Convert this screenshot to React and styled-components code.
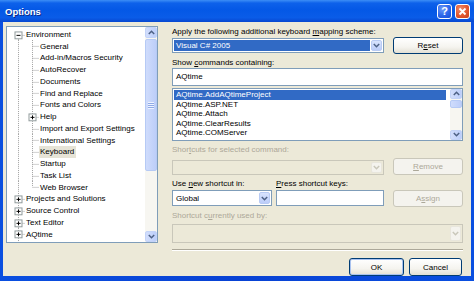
import styled, { createGlobalStyle } from "styled-components";

const GlobalStyle = createGlobalStyle`
  html, body {
    margin: 0;
    padding: 0;
    background: #0842d4;
  }
  body {
    width: 474px;
    height: 281px;
    overflow: hidden;
    font-family: "Liberation Sans", Arial, sans-serif;
    font-size: 8px;
    color: #000;
  }
`

const Window = styled.div`
  width: 474px;
  height: 281px;
  display: flex;
  flex-direction: column;
  background: linear-gradient(90deg, #0a4fe0 0%, #0842d4 50%, #0a4fe0 100%);
`

const TitleBar = styled.div`
  height: 22px;
  flex: none;
  display: flex;
  align-items: center;
  padding: 0 4px 0 5px;
  box-sizing: border-box;
  background: linear-gradient(180deg, #3c8ef6 0%, #0d61ea 14%, #0458e6 45%, #0a5ce8 80%, #0848d0 100%);
`

const Title = styled.div`
  flex: 1;
  color: #fff;
  font-weight: bold;
  font-size: 9.5px;
  text-shadow: 1px 1px 0 #0a2a8a;
`

const CaptionButtons = styled.div`
  display: flex;
  gap: 3px;
`

const CaptionButton = styled.div`
  width: 15px;
  height: 15px;
  box-sizing: border-box;
  border: 1px solid #fff;
  border-radius: 3px;
  display: flex;
  align-items: center;
  justify-content: center;
  color: #fff;
  font-weight: bold;
  font-size: 11px;
  background: ${({$close}) => $close
    ? 'radial-gradient(circle at 35% 30%, #f08a6a 0%, #e2572e 55%, #c8401c 100%)'
    : 'radial-gradient(circle at 35% 30%, #6e9cf8 0%, #2c66ea 55%, #1a4fd6 100%)'};
`

const Body = styled.div`
  flex: 1;
  margin: 0 3px 5px 3px;
  background: #ece9d8;
  display: flex;
  padding: 4px 8px 0 3px;
  min-height: 0;
`

const Tree = styled.div`
  width: 152px;
  height: 217px;
  box-sizing: border-box;
  border: 1px solid #7f9db9;
  background: #fff;
  display: flex;
  flex: none;
`

const TreeItems = styled.div`
  flex: 1;
  overflow: hidden;
  padding: 1.5px 0 0 4px;
`

const TreeRow = styled.div`
  height: 11.75px;
  display: flex;
  align-items: stretch;
`

const TreeLabel = styled.div`
  display: flex;
  align-items: center;
  padding: 0 2px 0 1px;
  margin-left: ${({$shift}) => $shift || 0}px;
  white-space: nowrap;
  background: ${({$selected}) => $selected ? '#e6e3d6' : 'transparent'};
`

const ScrollBar = styled.div`
  width: 12px;
  flex: none;
  display: flex;
  flex-direction: column;
  gap: 1px;
  background: #f7f6f1;
`

const ScrollButton = styled.div`
  height: ${({$h}) => $h || 11}px;
  flex: none;
  box-sizing: border-box;
  border: 1px solid #c3d3f8;
  border-radius: 2px;
  background: linear-gradient(90deg, #d2defc 0%, #bccefa 100%);
  display: flex;
  align-items: center;
  justify-content: center;
`

const ScrollThumb = styled.div`
  height: ${({$h}) => $h}px;
  flex: none;
  box-sizing: border-box;
  border: 1px solid #b6caf5;
  border-radius: 2px;
  background: linear-gradient(90deg, #cfdcfc 0%, #bdcef9 100%);
  display: flex;
  align-items: center;
  justify-content: center;
`

const ScrollTrack = styled.div`
  flex: 1;
`

const Grip = styled.div`
  width: 6px;
  height: 7px;
  background: repeating-linear-gradient(180deg, #eef3ff 0 1px, #8faae6 1px 2px);
`

const Right = styled.div`
  flex: 1;
  margin-left: 14px;
  display: flex;
  flex-direction: column;
`

const Label = styled.div`
  height: 10px;
  line-height: 10px;
  margin-top: ${({$mt}) => $mt || 0}px;
  width: ${({$w}) => $w ? `${$w}px` : 'auto'};
  flex: none;
  white-space: nowrap;
  color: ${({$disabled}) => $disabled ? '#aca899' : '#000'};
`

const Mn = styled.span`
  text-decoration: underline;
`

const Row = styled.div`
  display: flex;
  align-items: ${({$align}) => $align || 'center'};
  height: ${({$h}) => $h || 17}px;
  margin-top: ${({$mt}) => $mt || 0}px;
  gap: ${({$gap}) => $gap ?? 9}px;
  flex: none;
`

const Combo = styled.div`
  height: ${({$h}) => $h || 15}px;
  box-sizing: border-box;
  border: 1px solid ${({$disabled}) => $disabled ? '#c9c7ba' : '#7f9db9'};
  background: ${({$disabled}) => $disabled ? '#ece9d8' : '#fff'};
  padding: 1px;
  display: flex;
  flex: ${({$w}) => $w ? `0 0 ${$w}px` : '1'};
  margin-top: ${({$mt}) => $mt || 0}px;
`

const ComboText = styled.div`
  flex: 1;
  display: flex;
  align-items: center;
  padding-left: 2px;
  margin-right: 1px;
  background: ${({$selected}) => $selected ? '#316ac5' : 'transparent'};
  color: ${({$selected}) => $selected ? '#fff' : '#000'};
`

const DropButton = styled.div`
  width: 11px;
  flex: none;
  box-sizing: border-box;
  border-radius: 2px;
  border: 1px solid ${({$disabled}) => $disabled ? '#e8e6dc' : '#b9cbf4'};
  background: ${({$disabled}) => $disabled
    ? '#f4f3ee'
    : 'linear-gradient(180deg, #d8e3fd 0%, #bccdf9 100%)'};
  display: flex;
  align-items: center;
  justify-content: center;
`

const TextBox = styled.div`
  height: ${({$h}) => $h || 16}px;
  box-sizing: border-box;
  border: 1px solid #7f9db9;
  background: #fff;
  display: flex;
  align-items: center;
  padding-left: 3px;
  flex: ${({$w}) => $w ? `0 0 ${$w}px` : '1'};
  margin-top: ${({$mt}) => $mt || 0}px;
`

const ListBox = styled.div`
  height: 53px;
  margin-top: 2px;
  box-sizing: border-box;
  border: 1px solid #7f9db9;
  background: #fff;
  display: flex;
  flex: none;
`

const ListItems = styled.div`
  flex: 1;
  padding: 1.5px 4px 0 1px;
  overflow: hidden;
`

const ListItem = styled.div`
  height: 9.5px;
  line-height: 9.5px;
  padding-left: 2px;
  white-space: nowrap;
  background: ${({$selected}) => $selected ? '#316ac5' : 'transparent'};
  color: ${({$selected}) => $selected ? '#fff' : '#000'};
`

const Button = styled.div`
  width: ${({$w}) => $w || 70}px;
  height: ${({$h}) => $h || 17}px;
  flex: none;
  box-sizing: border-box;
  border: 1px solid ${({$disabled}) => $disabled ? '#c9c7ba' : '#003c74'};
  border-radius: 3px;
  background: ${({$disabled}) => $disabled
    ? '#f4f3ee'
    : 'linear-gradient(180deg, #ffffff 0%, #f5f4ef 60%, #e3e0d4 100%)'};
  box-shadow: ${({$default}) => $default ? 'inset 0 0 0 1px #a9c2ef' : 'none'};
  color: ${({$disabled}) => $disabled ? '#aca899' : '#000'};
  display: flex;
  align-items: center;
  justify-content: center;
`

const Separator = styled.div`
  margin-top: 6px;
  height: 0;
  border-top: 1px solid #aca899;
  border-bottom: 1px solid #fff;
  flex: none;
`

const Footer = styled.div`
  display: flex;
  justify-content: flex-end;
  gap: 5px;
  margin-top: 7px;
  padding-right: 1px;
`

const Chevron = ({up, disabled}) => (
  <svg width="7" height="5" viewBox="0 0 7 5">
    <path
      d={up ? "M0.8 4 L3.5 1.3 L6.2 4" : "M0.8 1 L3.5 3.7 L6.2 1"}
      fill="none"
      stroke={disabled ? '#c9c7ba' : '#4d6185'}
      strokeWidth="1.5"
    />
  </svg>
)

// one 14px column of the tree's dotted guide lines
const Guide = ({top, bottom, elbow, box}) => (
  <svg width="14" height="100%" viewBox="0 0 14 12" preserveAspectRatio="none" style={{flex: 'none'}}>
    {top && <line x1="7.5" y1="0" x2="7.5" y2="6" stroke="#a0a0a0" strokeDasharray="1 1"/>}
    {bottom && <line x1="7.5" y1="6" x2="7.5" y2="12" stroke="#a0a0a0" strokeDasharray="1 1"/>}
    {elbow && <line x1="7.5" y1="6.5" x2="14" y2="6.5" stroke="#a0a0a0" strokeDasharray="1 1"/>}
    {box && <>
      <rect x="4" y="3" width="7" height="7" fill="#fff" stroke="#919b9c"/>
      <line x1="5.5" y1="6.5" x2="9.5" y2="6.5" stroke="#000"/>
      {box === '+' && <line x1="7.5" y1="4.5" x2="7.5" y2="8.5" stroke="#000"/>}
    </>}
  </svg>
)

const tree = [
  {label: 'Environment', level: 0, box: '-', first: true},
  {label: 'General', level: 1},
  {label: 'Add-in/Macros Security', level: 1},
  {label: 'AutoRecover', level: 1},
  {label: 'Documents', level: 1},
  {label: 'Find and Replace', level: 1},
  {label: 'Fonts and Colors', level: 1},
  {label: 'Help', level: 1, box: '+'},
  {label: 'Import and Export Settings', level: 1},
  {label: 'International Settings', level: 1},
  {label: 'Keyboard', level: 1, selected: true},
  {label: 'Startup', level: 1},
  {label: 'Task List', level: 1},
  {label: 'Web Browser', level: 1, last: true},
  {label: 'Projects and Solutions', level: 0, box: '+'},
  {label: 'Source Control', level: 0, box: '+'},
  {label: 'Text Editor', level: 0, box: '+'},
  {label: 'AQtime', level: 0, box: '+'},
  {label: 'Windows Forms Designer', level: 0, box: '+'},
]

const commands = [
  'AQtime.AddAQtimeProject',
  'AQtime.ASP.NET',
  'AQtime.Attach',
  'AQtime.ClearResults',
  'AQtime.COMServer',
]

const TreeNode = ({item}) => (
  <TreeRow>
    {item.level === 0
      ? <Guide top={!item.first} bottom elbow box={item.box}/>
      : <>
          <Guide top bottom/>
          <Guide top bottom={!item.last} elbow box={item.box}/>
        </>}
    <TreeLabel $selected={item.selected}>{item.label}</TreeLabel>
  </TreeRow>
)

export default function App() {
  return (
    <Window>
      <GlobalStyle/>
      <TitleBar>
        <Title>Options</Title>
        <CaptionButtons>
          <CaptionButton>?</CaptionButton>
          <CaptionButton $close>
            <svg width="9" height="9" viewBox="0 0 9 9">
              <path d="M1.5 1.5 L7.5 7.5 M7.5 1.5 L1.5 7.5" stroke="#fff" strokeWidth="1.8"/>
            </svg>
          </CaptionButton>
        </CaptionButtons>
      </TitleBar>
      <Body>
        <Tree>
          <TreeItems>
            {tree.map(item => <TreeNode key={item.label} item={item}/>)}
          </TreeItems>
          <ScrollBar>
            <ScrollButton><Chevron up/></ScrollButton>
            <ScrollThumb $h={132}><Grip/></ScrollThumb>
            <ScrollTrack/>
            <ScrollButton><Chevron/></ScrollButton>
          </ScrollBar>
        </Tree>
        <Right>
          <Label $mt={1}>Apply the following additional keyboard <Mn>m</Mn>apping scheme:</Label>
          <Row>
            <Combo>
              <ComboText $selected>Visual C# 2005</ComboText>
              <DropButton><Chevron/></DropButton>
            </Combo>
            <Button>R<Mn>e</Mn>set</Button>
          </Row>
          <Label $mt={4}>Show <Mn>c</Mn>ommands containing:</Label>
          <TextBox>AQtime</TextBox>
          <ListBox>
            <ListItems>
              {commands.map((c, i) => <ListItem key={c} $selected={i === 0}>{c}</ListItem>)}
            </ListItems>
            <ScrollBar>
              <ScrollButton $h={10}><Chevron up/></ScrollButton>
              <ScrollThumb $h={8}/>
              <ScrollTrack/>
              <ScrollButton $h={10}><Chevron/></ScrollButton>
            </ScrollBar>
          </ListBox>
          <Label $mt={4} $disabled>Shor<Mn>t</Mn>cuts for selected command:</Label>
          <Row $mt={3} $align="flex-end">
            <Combo $disabled>
              <ComboText/>
              <DropButton $disabled><Chevron disabled/></DropButton>
            </Combo>
            <Button $disabled><Mn>R</Mn>emove</Button>
          </Row>
          <Row $h={10} $mt={4} $gap={0}>
            <Label $w={104}>Use <Mn>n</Mn>ew shortcut in:</Label>
            <Label><Mn>P</Mn>ress shortcut keys:</Label>
          </Row>
          <Row $mt={1}>
            <Combo $w={100} $h={16}>
              <ComboText>Global</ComboText>
              <DropButton><Chevron/></DropButton>
            </Combo>
            <TextBox $w={108} style={{marginLeft: -5}}/>
            <Button $disabled>A<Mn>s</Mn>sign</Button>
          </Row>
          <Label $mt={4} $disabled>Shortcut c<Mn>u</Mn>rrently used by:</Label>
          <Combo $disabled $h={16} $mt={3}>
            <ComboText/>
            <DropButton $disabled><Chevron disabled/></DropButton>
          </Combo>
          <Separator/>
          <Footer>
            <Button $w={55} $h={18} $default>OK</Button>
            <Button $w={53} $h={18}>Cancel</Button>
          </Footer>
        </Right>
      </Body>
    </Window>
  )
}
